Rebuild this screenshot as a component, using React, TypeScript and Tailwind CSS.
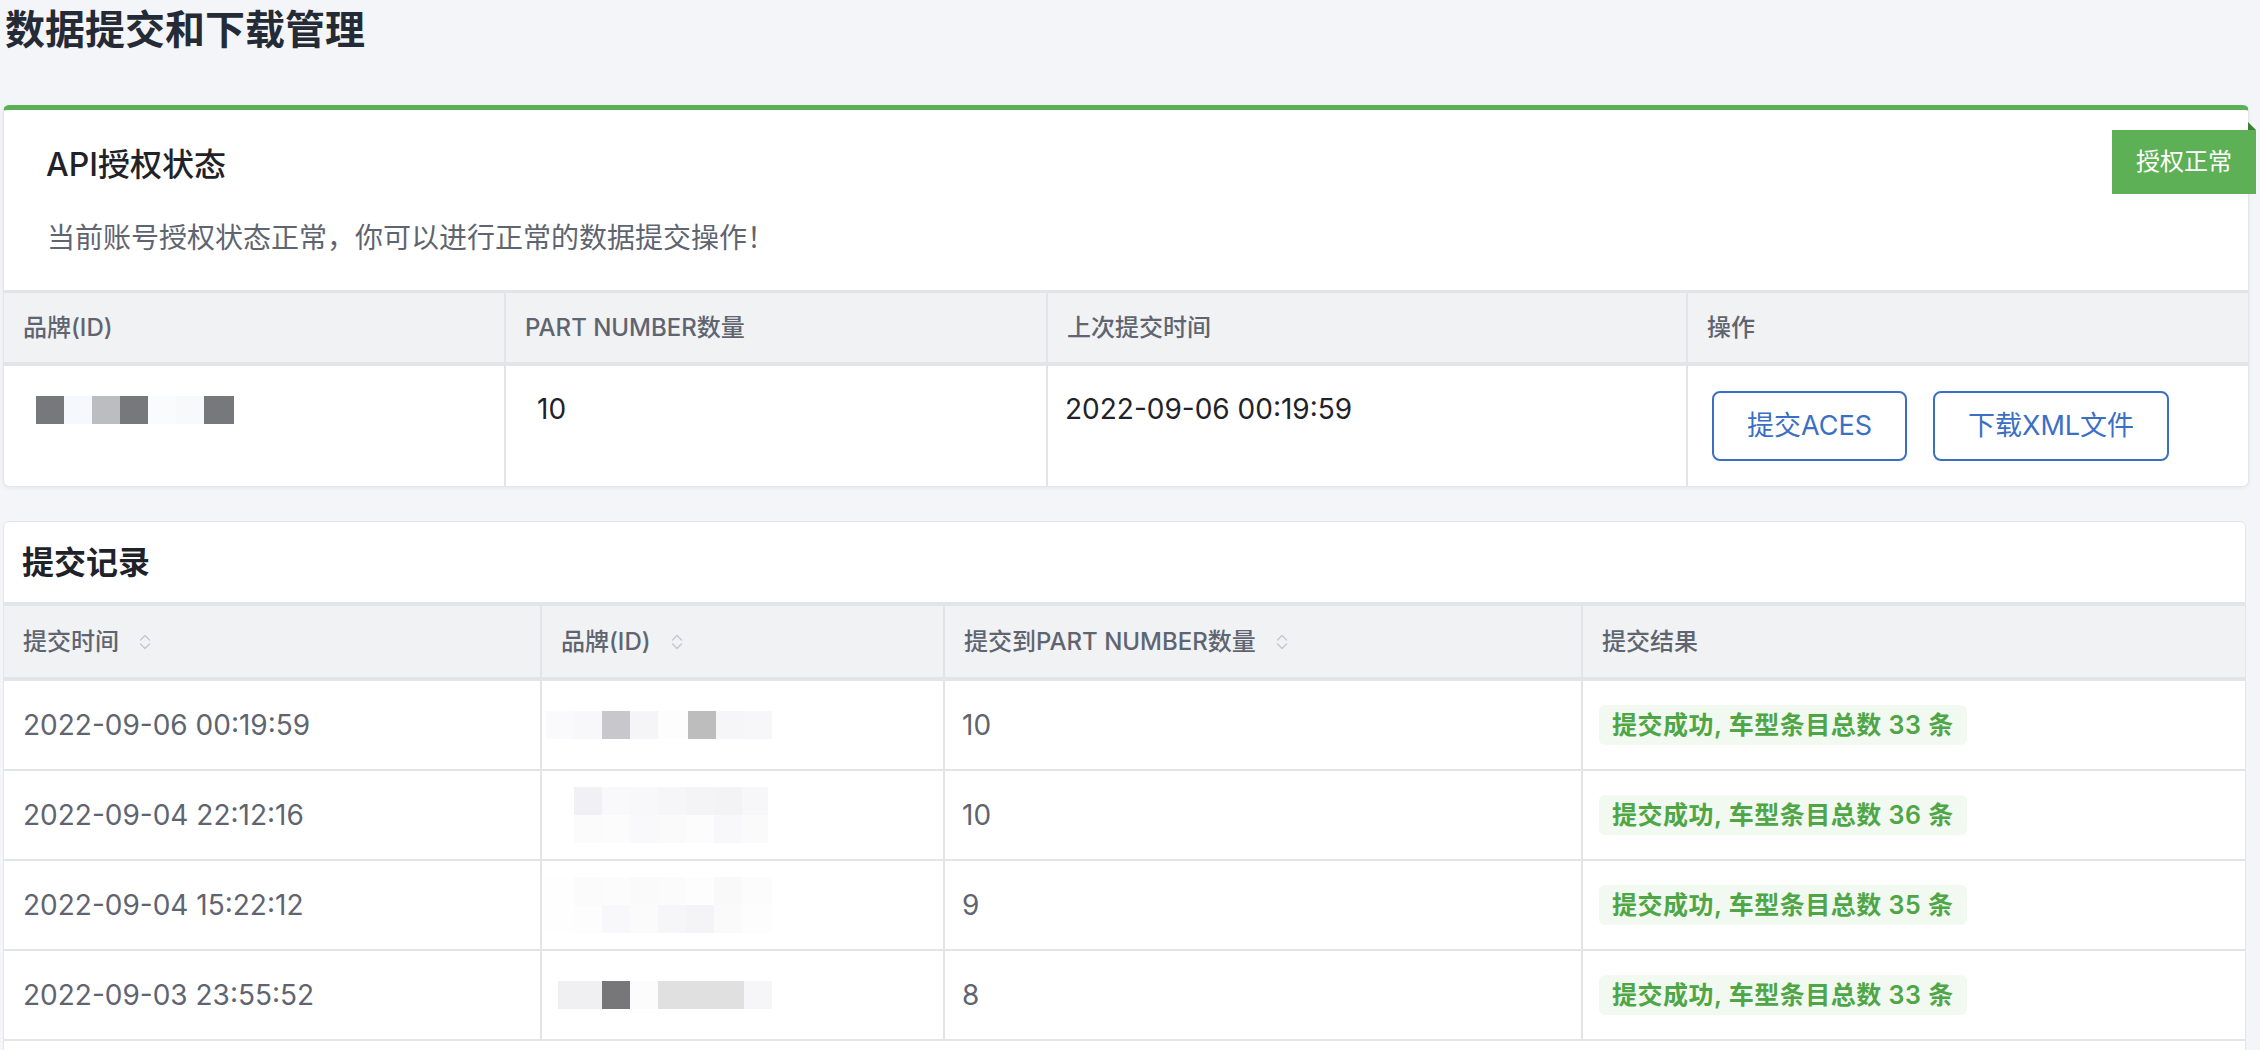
import React from "react";

type Block = { w: number; c: string };

const ID_MOSAIC_TOP: Block[][] = [
  [
    { w: 28, c: "#76787b" },
    { w: 28, c: "#f5f8fc" },
    { w: 28, c: "#bcbdc0" },
    { w: 28, c: "#76787b" },
    { w: 28, c: "#fafbfd" },
    { w: 28, c: "#f8f9fb" },
    { w: 30, c: "#76787b" },
  ],
];

type Record = {
  time: string;
  count: string;
  total: string;
  mosaic: Block[][];
  offset: number;
};

const records: Record[] = [
  {
    time: "2022-09-06 00:19:59",
    count: "10",
    total: "33",
    offset: 4,
    mosaic: [
      [
        { w: 28, c: "#fafafc" },
        { w: 28, c: "#f8f8fa" },
        { w: 28, c: "#c8c8cc" },
        { w: 28, c: "#f5f5f7" },
        { w: 30, c: "#fdfdfe" },
        { w: 28, c: "#bdbdbd" },
        { w: 28, c: "#f6f6f8" },
        { w: 28, c: "#f7f7f9" },
      ],
    ],
  },
  {
    time: "2022-09-04 22:12:16",
    count: "10",
    total: "36",
    offset: 32,
    mosaic: [
      [
        { w: 28, c: "#f1f1f5" },
        { w: 28, c: "#f9f9fb" },
        { w: 28, c: "#f8f8fa" },
        { w: 28, c: "#f6f6f8" },
        { w: 28, c: "#f4f4f7" },
        { w: 28, c: "#f3f3f6" },
        { w: 26, c: "#f7f7f9" },
      ],
      [
        { w: 28, c: "#fbfbfc" },
        { w: 28, c: "#fcfcfd" },
        { w: 28, c: "#f9f9fb" },
        { w: 28, c: "#fafafb" },
        { w: 28, c: "#fcfcfd" },
        { w: 28, c: "#f8f8fa" },
        { w: 26, c: "#fafafb" },
      ],
    ],
  },
  {
    time: "2022-09-04 15:22:12",
    count: "9",
    total: "35",
    offset: 0,
    mosaic: [
      [
        { w: 32, c: "#fefefe" },
        { w: 28, c: "#fbfbfc" },
        { w: 28, c: "#fcfcfd" },
        { w: 28, c: "#fafafb" },
        { w: 28, c: "#fbfbfc" },
        { w: 28, c: "#fdfdfd" },
        { w: 28, c: "#f9f9fa" },
        { w: 30, c: "#fcfcfd" },
      ],
      [
        { w: 32, c: "#fefefe" },
        { w: 28, c: "#fdfdfd" },
        { w: 28, c: "#f8f8fa" },
        { w: 28, c: "#fbfbfc" },
        { w: 28, c: "#f6f6f8" },
        { w: 28, c: "#f4f4f6" },
        { w: 28, c: "#fafafb" },
        { w: 30, c: "#fdfdfd" },
      ],
    ],
  },
  {
    time: "2022-09-03 23:55:52",
    count: "8",
    total: "33",
    offset: 16,
    mosaic: [
      [
        { w: 44, c: "#f0f0f3" },
        { w: 28, c: "#777779" },
        { w: 28, c: "#fcfcfc" },
        { w: 86, c: "#e0e0e1" },
        { w: 28, c: "#f6f6f8" },
      ],
    ],
  },
];

function Mosaic({ rows }: { rows: Block[][] }) {
  return (
    <div className="flex flex-col">
      {rows.map((row, i) => (
        <div key={i} className="flex h-[28px]">
          {row.map((b, j) => (
            <div key={j} className="h-full" style={{ width: b.w, backgroundColor: b.c }} />
          ))}
        </div>
      ))}
    </div>
  );
}

function SortIcon() {
  return (
    <svg
      width="14"
      height="20"
      viewBox="0 0 14 20"
      fill="none"
      stroke="#c4c7cd"
      strokeWidth="1.4"
      strokeLinecap="round"
      strokeLinejoin="round"
      className="ml-[19px] shrink-0"
    >
      <path d="M2.5 8 7 3.5 11.5 8" />
      <path d="M2.5 12 7 16.5 11.5 12" />
    </svg>
  );
}

const thBase =
  "p-0 bg-[#f1f2f4] border-[#e2e4e8] text-left align-middle font-medium text-[24px] text-[#5f6570]";

export default function App() {
  return (
    <div className="w-[2260px] h-[1050px] overflow-hidden bg-[#f4f5f8] font-['Inter','Noto_Sans_CJK_SC',sans-serif]">
      <h1 className="pl-[5px] text-[40px] leading-[60px] font-bold text-[#252b36]">数据提交和下载管理</h1>

      <div className="pl-[3px] pt-[45px]">
        {/* API status card */}
        <section className="relative w-[2246px] rounded-[6px] bg-white border border-[#e3e5e9] border-t-[5px] border-t-[#5bb155] shadow-[0_1px_4px_rgba(0,0,0,0.06)]">
          <div className="absolute right-[-8px] top-[20px] flex h-[64px] w-[144px] items-center justify-center bg-[#5db055] text-[24px] text-white">
            授权正常
          </div>
          <div className="absolute right-[-8px] top-[12px] h-[8px] w-[8px] bg-[#3e7f37] [clip-path:polygon(0_0,0_100%,100%_100%)]" />

          <h2 className="pl-[42px] pt-[33px] text-[32px] leading-[44px] font-medium text-[#1f2329]">API授权状态</h2>
          <p className="pl-[43px] pt-[31px] pb-[32px] text-[28px] leading-[40px] text-[#5f6570]">
            当前账号授权状态正常，你可以进行正常的数据提交操作！
          </p>

          <table className="w-full table-fixed border-separate border-spacing-0">
            <colgroup>
              <col className="w-[500px]" />
              <col className="w-[542px]" />
              <col className="w-[640px]" />
              <col />
            </colgroup>
            <thead>
              <tr>
                {["品牌(ID)", "PART NUMBER数量", "上次提交时间", "操作"].map((h, i) => (
                  <th
                    key={h}
                    className={`${thBase} border-t-[3px] border-b-[4px] ${i > 0 ? "border-l-2" : ""}`}
                  >
                    <div className="flex h-[69px] items-center px-[19px]">{h}</div>
                  </th>
                ))}
              </tr>
            </thead>
            <tbody>
              <tr className="text-[28px] leading-[36px] text-[#1f2329]">
                <td className="p-0 align-top">
                  <div className="pl-[32px] pt-[30px]">
                    <Mosaic rows={ID_MOSAIC_TOP} />
                  </div>
                </td>
                <td className="p-0 align-top border-l-2 border-[#e2e4e8]">
                  <div className="pl-[31px] pt-[25px]">10</div>
                </td>
                <td className="p-0 align-top border-l-2 border-[#e2e4e8]">
                  <div className="px-[17px] pt-[25px]">2022-09-06 00:19:59</div>
                </td>
                <td className="p-0 align-top border-l-2 border-[#e2e4e8]">
                  <div className="flex gap-[26px] pl-[24px] py-[25px]">
                    <button className="flex h-[70px] items-center rounded-[8px] border-2 border-[#3a6fc4] bg-white px-[33px] text-[27px] text-[#3a6fc4]">
                      提交ACES
                    </button>
                    <button className="flex h-[70px] items-center rounded-[8px] border-2 border-[#3a6fc4] bg-white px-[33px] text-[27px] text-[#3a6fc4]">
                      下载XML文件
                    </button>
                  </div>
                </td>
              </tr>
            </tbody>
          </table>
        </section>

        {/* Submission history card */}
        <section className="mt-[34px] w-[2243px] rounded-[6px] bg-white border border-[#e3e5e9] pb-[40px]">
          <h2 className="pl-[18px] pt-[19px] pb-[17px] text-[32px] leading-[44px] font-semibold text-[#1f2329]">提交记录</h2>
          <table className="w-full table-fixed border-separate border-spacing-0">
            <colgroup>
              <col className="w-[536px]" />
              <col className="w-[403px]" />
              <col className="w-[638px]" />
              <col />
            </colgroup>
            <thead>
              <tr>
                {[
                  { t: "提交时间", s: true },
                  { t: "品牌(ID)", s: true },
                  { t: "提交到PART NUMBER数量", s: true },
                  { t: "提交结果", s: false },
                ].map((h, i) => (
                  <th
                    key={h.t}
                    className={`${thBase} border-t-[4px] border-b-[4px] ${i > 0 ? "border-l-2" : ""}`}
                  >
                    <div className="flex h-[71px] items-center px-[19px]">
                      <span>{h.t}</span>
                      {h.s && <SortIcon />}
                    </div>
                  </th>
                ))}
              </tr>
            </thead>
            <tbody className="text-[28px] leading-[36px] text-[#5f6570]">
              {records.map((r) => (
                <tr key={r.time}>
                  <td className="p-0 border-b-2 border-[#e2e4e8]">
                    <div className="flex h-[88px] items-center px-[19px]">{r.time}</div>
                  </td>
                  <td className="p-0 border-b-2 border-l-2 border-[#e2e4e8]">
                    <div className="flex h-[88px] items-center" style={{ paddingLeft: r.offset }}>
                      <Mosaic rows={r.mosaic} />
                    </div>
                  </td>
                  <td className="p-0 border-b-2 border-l-2 border-[#e2e4e8]">
                    <div className="flex h-[88px] items-center px-[17px]">{r.count}</div>
                  </td>
                  <td className="p-0 border-b-2 border-l-2 border-[#e2e4e8]">
                    <div className="flex h-[88px] items-center px-[16px]">
                      <span className="inline-flex h-[40px] items-center rounded-[6px] bg-[#f2f9f0] px-[13px] text-[25px] font-semibold tracking-[0.5px] text-[#4ea646]">
                        提交成功, 车型条目总数 {r.total} 条
                      </span>
                    </div>
                  </td>
                </tr>
              ))}
            </tbody>
          </table>
        </section>
      </div>
    </div>
  );
}
